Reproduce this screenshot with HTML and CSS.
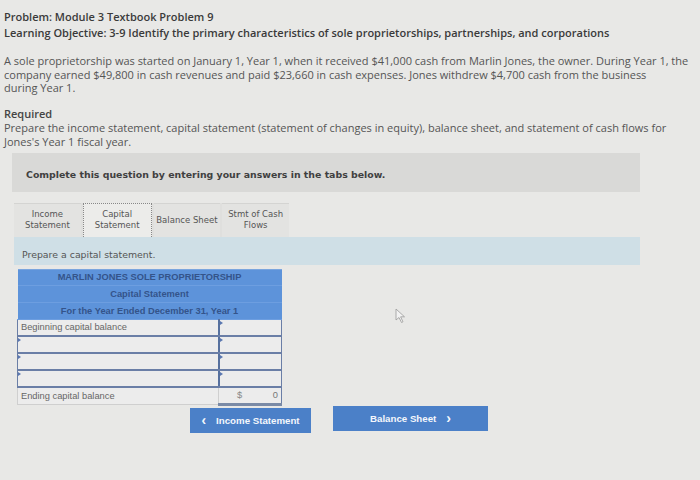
FILE: index.html
```html
<!DOCTYPE html>
<html>
<head>
<meta charset="utf-8">
<link rel="stylesheet" href="styles.css">
</head>
<body>
<div class="page">
  <div class="head">
    <p class="title">Problem: Module 3 Textbook Problem 9</p>
    <p class="title">Learning Objective: 3-9 Identify the primary characteristics of sole proprietorships, partnerships, and corporations</p>
  </div>
  <p class="para">A sole proprietorship was started on January 1, Year 1, when it received $41,000 cash from Marlin Jones, the owner. During Year 1, the<br>company earned $49,800 in cash revenues and paid $23,660 in cash expenses. Jones withdrew $4,700 cash from the business<br>during Year 1.</p>
  <div class="req">
    <p class="req-h">Required</p>
    <p class="req-t">Prepare the income statement, capital statement (statement of changes in equity), balance sheet, and statement of cash flows for<br>Jones's Year 1 fiscal year.</p>
  </div>
  <div class="instr">Complete this question by entering your answers in the tabs below.</div>
  <div class="work">
    <div class="tabs">
      <div class="tab">Income<br>Statement</div>
      <div class="tab active">Capital<br>Statement</div>
      <div class="tab">Balance Sheet</div>
      <div class="tab">Stmt of Cash<br>Flows</div>
    </div>
    <div class="bar">Prepare a capital statement.</div>
    <table class="stmt">
      <tr class="hd"><td colspan="2">MARLIN JONES SOLE PROPRIETORSHIP</td></tr>
      <tr class="hd"><td colspan="2">Capital Statement</td></tr>
      <tr class="hd"><td colspan="2">For the Year Ended December 31, Year 1</td></tr>
      <tr class="row"><td class="lbl">Beginning capital balance</td><td class="val in"></td></tr>
      <tr class="row"><td class="lbl in"></td><td class="val in"></td></tr>
      <tr class="row"><td class="lbl in"></td><td class="val in"></td></tr>
      <tr class="row"><td class="lbl in"></td><td class="val in"></td></tr>
      <tr class="row end"><td class="lbl">Ending capital balance</td><td class="val tot"><span>$</span><span>0</span></td></tr>
    </table>
    <div class="nav">
      <div class="btn prev"><span class="chev">&lsaquo;</span>Income Statement</div>
      <div class="btn next">Balance Sheet<span class="chev">&rsaquo;</span></div>
    </div>
  </div>
  <svg class="cursor" width="12" height="16" viewBox="0 0 12 16"><path d="M1 1 L1 12 L4 9.5 L6.5 14.5 L8 13.8 L5.6 8.8 L9.5 8.8 Z" fill="#f2f2f2" stroke="#9a9a9a" stroke-width="0.8"/></svg>
</div>
</body>
</html>
```
FILE: styles.css
```css
* { box-sizing: border-box; }
html, body { margin: 0; padding: 0; }
body {
  background: #e8e8e6;
  width: 700px;
  height: 480px;
  overflow: hidden;
  font-family: "Open Sans", Lato, sans-serif;
  color: #4a4a4a;
}
.page {
  position: relative;
  padding: 9px 0 0 4px;
}
p { margin: 0; white-space: nowrap; }
.head .title {
  font-weight: 600;
  font-size: 11px;
  line-height: 16px;
  color: #3a3a3a;
}
.para {
  margin-top: 13px;
  font-size: 11px;
  line-height: 13.5px;
  color: #555;
}
.req { margin-top: 12px; }
.req-h {
  font-weight: 600;
  font-size: 11px;
  line-height: 14px;
  color: #444;
}
.req-t {
  font-size: 11px;
  line-height: 14px;
  color: #555;
}
.instr {
  margin: 4px 0 0 8px;
  width: 628px;
  height: 39px;
  background: #d9d9d7;
  padding: 16px 0 0 14px;
  font-family: "DejaVu Sans", Verdana, sans-serif;
  font-weight: bold;
  font-size: 9.4px;
  color: #404040;
}
.work {
  margin: 11px 0 0 10px;
  font-family: "DejaVu Sans", Verdana, sans-serif;
}
.tabs {
  display: flex;
  width: 275px;
  height: 34px;
  background: #dfdfdd;
  gap: 2px;
}
.tab {
  flex: 1;
  display: flex;
  align-items: center;
  justify-content: center;
  text-align: center;
  font-size: 8.5px;
  line-height: 11px;
  color: #555;
  background: #e3e3e1;
  border-top: 1px solid #d4d4d2;
}
.tab.active {
  background: #ececea;
  border: 1px dotted #888;
  border-bottom: none;
}
.bar {
  width: 626px;
  height: 28px;
  background: #cfdfe6;
  padding: 12px 0 0 8px;
  font-size: 9.4px;
  color: #555;
}
.stmt {
  margin: 4px 0 0 3px;
  width: 265px;
  border-collapse: collapse;
  font-family: "Liberation Sans", Arial, sans-serif;
  font-size: 9.3px;
}
.stmt td { padding: 0; }
.hd td {
  background: #5d93da;
  color: #34548a;
  font-weight: bold;
  text-align: center;
  height: 17px;
  border-bottom: 1px solid #6d9ee0;
}
.hd:first-child td { height: 16px; border-top: 1px solid #7aa5de; }
.row td {
  height: 17px;
  border: 1px solid #6a7ea6;
  border-width: 0 0 2px 0;
  background: #ececec;
  color: #666;
}
.row .lbl { width: 201px; padding-left: 3px; border-left: 1px solid #6a7ea6; }
.row .val { border-left: 2px solid #56709e; border-right: 1px solid #6a7ea6; }
.row td.in { position: relative; }
.row td.in::before {
  content: "";
  position: absolute;
  left: 0;
  top: 1px;
  border-left: 3px solid #5a77b0;
  border-top: 2px solid transparent;
  border-bottom: 2px solid transparent;
}
.row.end td { border-bottom: 1px solid #cfcfcf; height: 17px; }
.row.end .lbl { border-left: 1px solid #cfcfcf; }
.row.end .val { border-left: 1px solid #cfcfcf; border-bottom: 3px solid #7a8aa6; }
.tot { padding: 0 3px 0 18px !important; }
.tot span:first-child { float: left; color: #888; }
.tot span:last-child { float: right; color: #777; }
.nav {
  display: flex;
  gap: 22px;
  margin: 0 0 0 176px;
}
.btn {
  height: 25px;
  background: #4b80c8;
  color: #f4f7fc;
  font-family: "Liberation Sans", Arial, sans-serif;
  font-weight: bold;
  font-size: 9.7px;
  display: flex;
  align-items: center;
  justify-content: center;
}
.btn.prev { width: 121px; margin-top: 2px; }
.btn.next { width: 155px; }
.chev { font-size: 14px; font-weight: bold; line-height: 10px; }
.prev .chev { margin-right: 10px; }
.next .chev { margin-left: 10px; }
.cursor {
  position: absolute;
  left: 395px;
  top: 308px;
}
```
